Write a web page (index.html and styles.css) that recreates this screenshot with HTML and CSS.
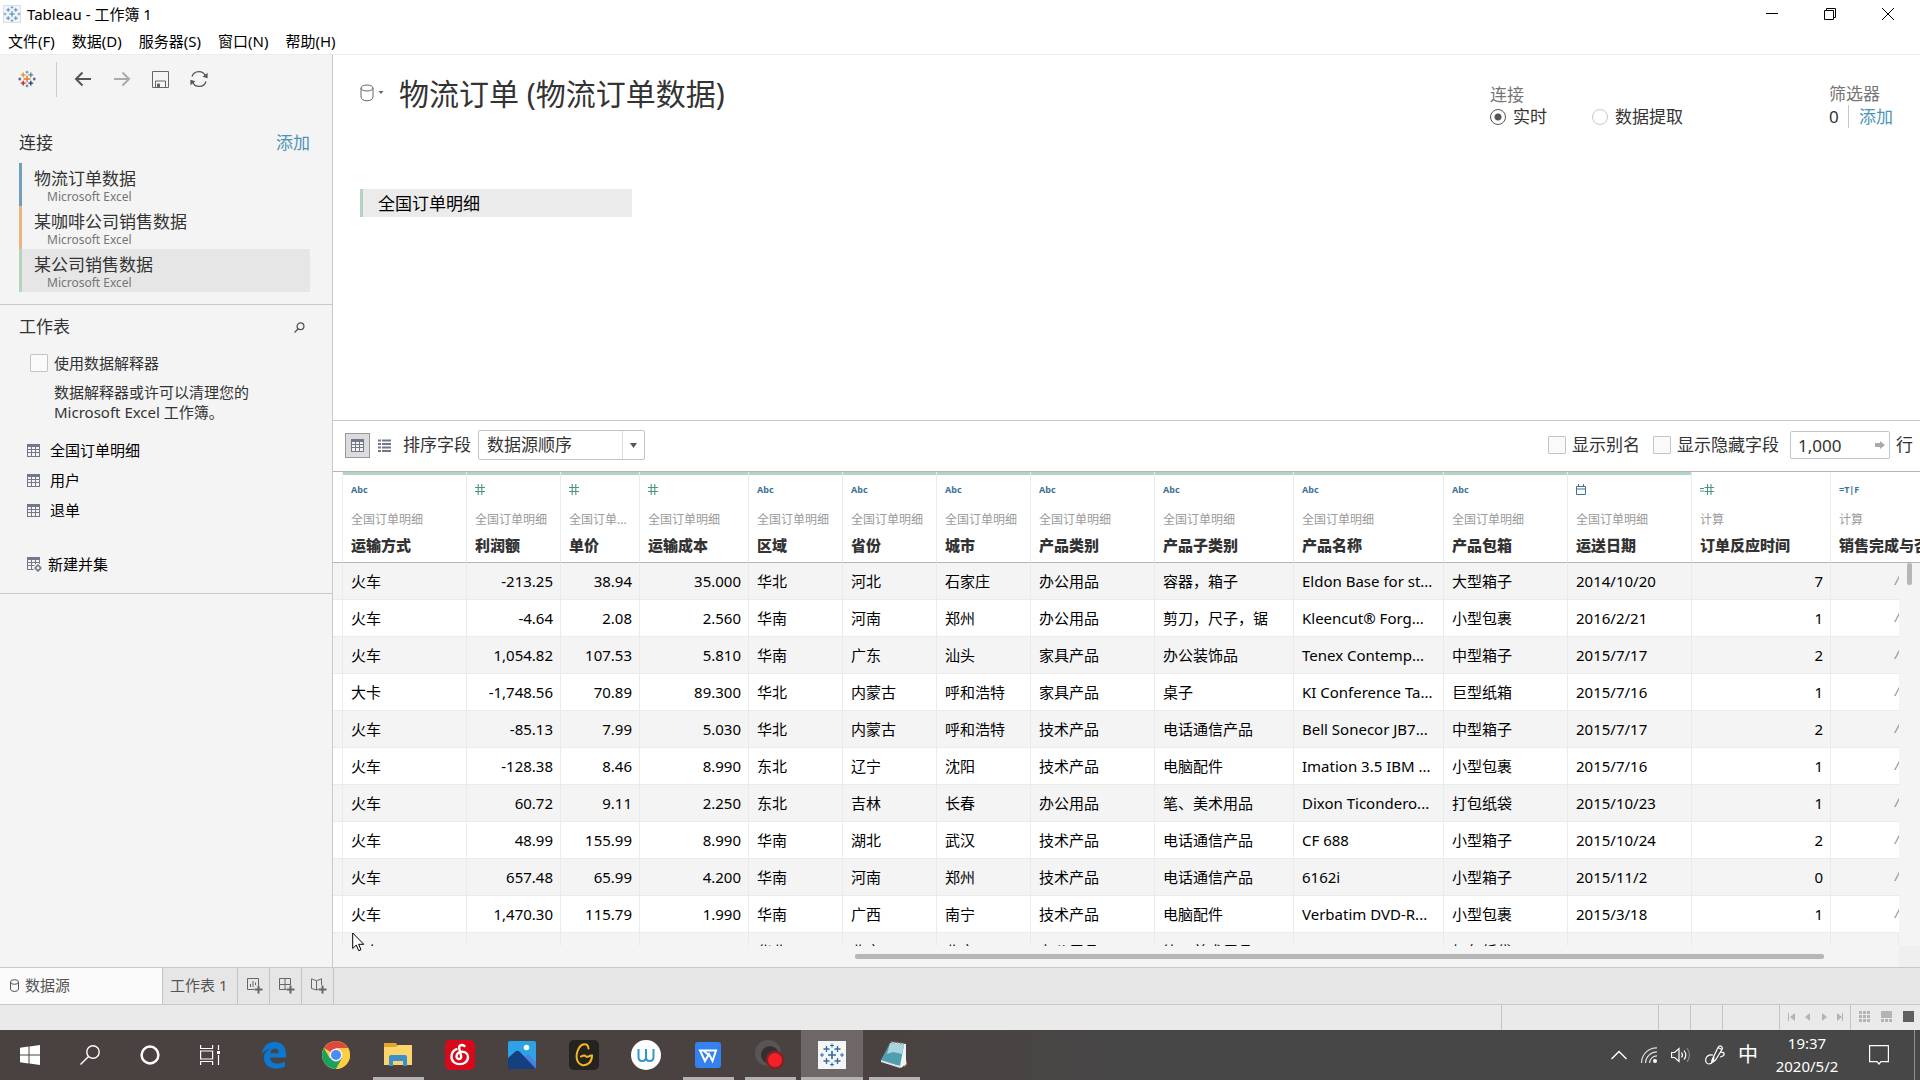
FILE: index.html
```html
<!DOCTYPE html>
<html lang="zh-CN">
<head>
<meta charset="utf-8">
<title>Tableau - 工作簿 1</title>
<link rel="stylesheet" href="styles.css">
</head>
<body>
<svg class="defs" aria-hidden="true">
  <symbol id="grid" viewBox="0 0 13 13"><path fill="#717887" d="M0 0h13v13H0z"/><path fill="#f4f4f4" d="M1 3h3v2H1zM5 3h3v2H5zM9 3h3v2H9zM1 6h3v2H1zM5 6h3v2H5zM9 6h3v2H9zM1 9h3v3H1zM5 9h3v3H5zM9 9h3v3H9z"/></symbol>
  <symbol id="hash" viewBox="0 0 10 11"><path fill="none" stroke="#4a9584" stroke-width="1.1" d="M3.2 0v11M6.8 0v11M0 3.5h10M0 7.5h10"/></symbol>
  <symbol id="logo" viewBox="0 0 26 26"><path fill="none" stroke="currentColor" stroke-width="1.700" d="M13 9v8M9 13h8"/><path fill="none" stroke="currentColor" stroke-width="1.300" d="M7.500 4v6M4.500 7h6M18.500 4v6M15.500 7h6M7.500 16v6M4.500 19h6M18.500 16v6M15.500 19h6"/><path fill="none" stroke="currentColor" stroke-width="1" d="M13 1.500v4M11 3.500h4M13 20.500v4M11 22.500h4M3 11v4M1 13h4M23 11v4M21 13h4"/></symbol>
</svg>

<header class="titlebar">
  <svg class="app-icon" width="18" height="18" viewBox="0 0 26 26"><path fill="#f2f6fa" stroke="#c5c9cc" d="M.5.5h25v25H.5z"/><use href="#logo"/></svg>
  <span class="app-title">Tableau - 工作簿 1</span>
  <div class="window-buttons">
    <button aria-label="最小化"><svg width="12" height="12"><path stroke="#000" d="M0 5.500h12"/></svg></button>
    <button aria-label="还原"><svg width="12" height="12" fill="none" stroke="#000"><path d="M.5 2.500h9v9h-9zM2.500 2.500v-2h9v9h-2"/></svg></button>
    <button aria-label="关闭"><svg width="12" height="12" stroke="#000"><path d="M0 0l12 12M12 0L0 12"/></svg></button>
  </div>
</header>
<nav class="menubar">
  <button>文件(F)</button><button>数据(D)</button><button>服务器(S)</button><button>窗口(N)</button><button>帮助(H)</button>
</nav>

<main class="workspace">
  <aside class="sidebar">
    <div class="toolbar">
      <button aria-label="起始页"><svg width="18" height="18" viewBox="0 0 26 26" fill="none" stroke-width="2"><path stroke="#e8762c" d="M13 8v10M8 13h10"/><path stroke="#eb9129" d="M7.500 3.500v7M4 7h7"/><path stroke="#59879b" d="M18.500 3.500v7M15 7h7"/><path stroke="#c72035" d="M7.500 15.500v7M4 19h7"/><path stroke="#1f457e" d="M18.500 15.500v7M15 19h7"/><path stroke="#7199a6" d="M13 1v4M11 3h4"/><path stroke="#59879b" d="M13 21v4M11 23h4"/><path stroke="#5b6591" d="M2.500 11v4M.5 13h4M23.500 11v4M21.500 13h4"/></svg></button>
      <span class="separator"></span>
      <button aria-label="后退"><svg width="18" height="16" fill="none" stroke="#555" stroke-width="2"><path d="M17 8H2M8.500 1.500L2 8l6.500 6.500"/></svg></button>
      <button aria-label="前进"><svg width="18" height="16" fill="none" stroke="#aaa" stroke-width="2"><path d="M1 8h15M9.500 1.500L16 8l-6.500 6.500"/></svg></button>
      <button aria-label="保存"><svg width="17" height="17" fill="none" stroke="#666"><path d="M.5.5h16v16H.5zM3.500 16v-6h10v6"/><path fill="#666" d="M5.500 13h2v3h-2z"/></svg></button>
      <button aria-label="刷新"><svg width="18" height="18" fill="none" stroke="#555" stroke-width="1.300"><path d="M2 6.500A7.200 7.200 0 0 1 15.500 6M16 11.500A7.200 7.200 0 0 1 2.500 12"/><path fill="#555" stroke="none" d="M17.600 2.800v5.400l-5-1.400zM.4 15.200V9.800l5 1.400z"/></svg></button>
    </div>
    <section class="connections">
      <div class="section-head"><h2>连接</h2><a href="#">添加</a></div>
      <ul>
        <li class="connection blue"><span class="name">物流订单数据</span><span class="kind">Microsoft Excel</span></li>
        <li class="connection orange"><span class="name">某咖啡公司销售数据</span><span class="kind">Microsoft Excel</span></li>
        <li class="connection green selected"><span class="name">某公司销售数据</span><span class="kind">Microsoft Excel</span></li>
      </ul>
    </section>
    <section class="sheets">
      <div class="section-head"><h2>工作表</h2><button aria-label="搜索"><svg width="11" height="11" fill="none" stroke="#555" stroke-width="1.300"><circle cx="6.500" cy="4.300" r="3.400"/><path d="M4.200 6.800L.6 10.500"/></svg></button></div>
      <label class="check interpreter"><input type="checkbox">使用数据解释器</label>
      <p class="hint">数据解释器或许可以清理您的<br>Microsoft Excel 工作簿。</p>
      <ul>
        <li><svg width="13" height="13"><use href="#grid"/></svg>全国订单明细</li>
        <li><svg width="13" height="13"><use href="#grid"/></svg>用户</li>
        <li><svg width="13" height="13"><use href="#grid"/></svg>退单</li>
      </ul>
      <button class="union"><svg width="15" height="15"><use href="#grid" width="13" height="13"/><circle cx="11" cy="11" r="4.500" fill="#f4f4f4"/><circle cx="11" cy="11" r="2.200" fill="none" stroke="#717887" stroke-width="1.500"/><path stroke="#717887" stroke-width="1.200" d="M11 7v1.500M11 13.500V15M7 11h1.500M13.500 11H15"/></svg>新建并集</button>
    </section>
  </aside>

  <div class="content">
    <section class="canvas">
      <div class="source-head">
        <button class="source-menu" aria-label="数据源"><svg width="24" height="18" fill="none" stroke="#666"><ellipse cx="7" cy="4" rx="6" ry="3"/><path d="M1 4v9c0 5 12 5 12 0V4"/><path fill="#666" stroke="none" d="M18.500 7h5l-2.500 3z"/></svg></button>
        <h1>物流订单 (物流订单数据)</h1>
        <fieldset>
          <legend>连接</legend>
          <label><input type="radio" name="mode" checked>实时</label>
          <label><input type="radio" name="mode">数据提取</label>
        </fieldset>
        <div class="filters"><span class="caption">筛选器</span><span class="count">0</span><a href="#">添加</a></div>
      </div>
      <div class="table-pill">全国订单明细</div>
    </section>

    <div class="gridbar">
      <button class="view active" aria-label="网格"><svg width="13" height="13"><use href="#grid"/></svg></button>
      <button class="view" aria-label="列表"><svg width="13" height="13" stroke="#717887" stroke-width="2"><path d="M0 1.500h3M4 1.500h9M0 5h3M4 5h9M0 8.500h3M4 8.500h9M0 12h3M4 12h9"/></svg></button>
      <label for="sort">排序字段</label>
      <span class="select-box"><select id="sort"><option>数据源顺序</option></select><svg width="7" height="5"><path fill="#555" d="M0 0h7L3.500 5z"/></svg></span>
      <label class="check push"><input type="checkbox">显示别名</label>
      <label class="check"><input type="checkbox">显示隐藏字段</label>
      <span class="rows-box"><input id="rows" type="text" value="1,000"><svg width="10" height="8"><path fill="#aaa" d="M0 2h5V0l5 4-5 4V6H0z"/></svg></span>
      <label for="rows">行</label>
    </div>

    <div class="grid-wrap">
      <table>
        <colgroup><col class="c10"><col class="c124"><col class="c94"><col class="c79"><col class="c109"><col class="c94"><col class="c94"><col class="c94"><col class="c124"><col class="c139"><col class="c150"><col class="c124"><col class="c124"><col class="c139"><col><col class="c21"></colgroup>
        <thead><tr>
          <th class="calc"></th>
          <th><i>Abc</i><small>全国订单明细</small><b>运输方式</b></th>
          <th><i><svg width="10" height="11"><use href="#hash"/></svg></i><small>全国订单明细</small><b>利润额</b></th>
          <th><i><svg width="10" height="11"><use href="#hash"/></svg></i><small>全国订单...</small><b>单价</b></th>
          <th><i><svg width="10" height="11"><use href="#hash"/></svg></i><small>全国订单明细</small><b>运输成本</b></th>
          <th><i>Abc</i><small>全国订单明细</small><b>区域</b></th>
          <th><i>Abc</i><small>全国订单明细</small><b>省份</b></th>
          <th><i>Abc</i><small>全国订单明细</small><b>城市</b></th>
          <th><i>Abc</i><small>全国订单明细</small><b>产品类别</b></th>
          <th><i>Abc</i><small>全国订单明细</small><b>产品子类别</b></th>
          <th><i>Abc</i><small>全国订单明细</small><b>产品名称</b></th>
          <th><i>Abc</i><small>全国订单明细</small><b>产品包箱</b></th>
          <th><i><svg width="10" height="11" fill="none" stroke="#3f7396"><path d="M.5 2.500h9v8h-9zM.5 5h9M2.500 0v2.500M7.500 0v2.500"/></svg></i><small>全国订单明细</small><b>运送日期</b></th>
          <th class="calc"><i><svg width="14" height="11" stroke="#4a9584"><path d="M0 4.500h4M0 7h4"/><path stroke-width="1.100" d="M7.500 0v11M11 0v11M4.500 3.500H14M4.500 7.500H14"/></svg></i><small>计算</small><b>订单反应时间</b></th>
          <th class="calc last" colspan="2"><i>=T|F</i><small>计算</small><b>销售完成与否</b></th>
        </tr></thead>
        <tbody>
          <tr><td></td><td>火车</td><td class="n">-213.25</td><td class="n">38.94</td><td class="n">35.000</td><td>华北</td><td>河北</td><td>石家庄</td><td>办公用品</td><td>容器，箱子</td><td>Eldon Base for st...</td><td>大型箱子</td><td>2014/10/20</td><td class="n">7</td><td class="clip">/</td><td class="track" rowspan="11"><div class="thumb"></div></td></tr>
          <tr><td></td><td>火车</td><td class="n">-4.64</td><td class="n">2.08</td><td class="n">2.560</td><td>华南</td><td>河南</td><td>郑州</td><td>办公用品</td><td>剪刀，尺子，锯</td><td>Kleencut® Forg...</td><td>小型包裹</td><td>2016/2/21</td><td class="n">1</td><td class="clip">/</td></tr>
          <tr><td></td><td>火车</td><td class="n">1,054.82</td><td class="n">107.53</td><td class="n">5.810</td><td>华南</td><td>广东</td><td>汕头</td><td>家具产品</td><td>办公装饰品</td><td>Tenex Contemp...</td><td>中型箱子</td><td>2015/7/17</td><td class="n">2</td><td class="clip">/</td></tr>
          <tr><td></td><td>大卡</td><td class="n">-1,748.56</td><td class="n">70.89</td><td class="n">89.300</td><td>华北</td><td>内蒙古</td><td>呼和浩特</td><td>家具产品</td><td>桌子</td><td>KI Conference Ta...</td><td>巨型纸箱</td><td>2015/7/16</td><td class="n">1</td><td class="clip">/</td></tr>
          <tr><td></td><td>火车</td><td class="n">-85.13</td><td class="n">7.99</td><td class="n">5.030</td><td>华北</td><td>内蒙古</td><td>呼和浩特</td><td>技术产品</td><td>电话通信产品</td><td>Bell Sonecor JB7...</td><td>中型箱子</td><td>2015/7/17</td><td class="n">2</td><td class="clip">/</td></tr>
          <tr><td></td><td>火车</td><td class="n">-128.38</td><td class="n">8.46</td><td class="n">8.990</td><td>东北</td><td>辽宁</td><td>沈阳</td><td>技术产品</td><td>电脑配件</td><td>Imation 3.5 IBM ...</td><td>小型包裹</td><td>2015/7/16</td><td class="n">1</td><td class="clip">/</td></tr>
          <tr><td></td><td>火车</td><td class="n">60.72</td><td class="n">9.11</td><td class="n">2.250</td><td>东北</td><td>吉林</td><td>长春</td><td>办公用品</td><td>笔、美术用品</td><td>Dixon Ticondero...</td><td>打包纸袋</td><td>2015/10/23</td><td class="n">1</td><td class="clip">/</td></tr>
          <tr><td></td><td>火车</td><td class="n">48.99</td><td class="n">155.99</td><td class="n">8.990</td><td>华南</td><td>湖北</td><td>武汉</td><td>技术产品</td><td>电话通信产品</td><td>CF 688</td><td>小型箱子</td><td>2015/10/24</td><td class="n">2</td><td class="clip">/</td></tr>
          <tr><td></td><td>火车</td><td class="n">657.48</td><td class="n">65.99</td><td class="n">4.200</td><td>华南</td><td>河南</td><td>郑州</td><td>技术产品</td><td>电话通信产品</td><td>6162i</td><td>小型箱子</td><td>2015/11/2</td><td class="n">0</td><td class="clip">/</td></tr>
          <tr><td></td><td>火车</td><td class="n">1,470.30</td><td class="n">115.79</td><td class="n">1.990</td><td>华南</td><td>广西</td><td>南宁</td><td>技术产品</td><td>电脑配件</td><td>Verbatim DVD-R...</td><td>小型包裹</td><td>2015/3/18</td><td class="n">1</td><td class="clip">/</td></tr>
          <tr><td></td><td>火车</td><td class="n"></td><td class="n"></td><td class="n"></td><td>华北</td><td>北京</td><td>北京</td><td>办公用品</td><td>笔、美术用品</td><td></td><td>打包纸袋</td><td></td><td class="n"></td><td></td></tr>
        </tbody>
      </table>
    </div>
    <div class="hscroll"><div class="bar"></div><div class="corner"></div></div>
  </div>
</main>

<nav class="tabs">
  <button class="tab source"><svg width="9" height="13" fill="none" stroke="#555"><ellipse cx="4.500" cy="3" rx="4" ry="2.300"/><path d="M.5 3v7c0 3.200 8 3.200 8 0V3"/></svg>数据源</button>
  <button class="tab sheet">工作表 1</button>
  <button class="tab add" aria-label="新建工作表"><svg width="16" height="16" fill="none" stroke="#666"><path d="M7 11.500H.5V.5h11V7M3.500 9V6M6 9V3M8.500 7V4.500"/><path stroke-width="2" d="M11.500 7.500v8M7.500 11.500h8"/></svg></button>
  <button class="tab add" aria-label="新建仪表板"><svg width="16" height="16" fill="none" stroke="#666"><path d="M7 11.500H.5V.5h11V7M.5 6.500h11M6 .5v11"/><path stroke-width="2" d="M11.500 7.500v8M7.500 11.500h8"/></svg></button>
  <button class="tab add" aria-label="新建故事"><svg width="16" height="16" fill="none" stroke="#666"><path d="M7 11L5.500 12 .5 10.500V.8l5 2L10.500.8V7M5.500 3v9"/><path stroke-width="2" d="M11.500 7.500v8M7.500 11.500h8"/></svg></button>
</nav>
<div class="statusbar">
  <span class="s156"></span><span class="s32"></span><span class="s32"></span><span class="s57"></span>
  <span class="s71"><svg width="56" height="8" fill="#b4b4b4"><path d="M0 0h1v8H0zM7 0v8L2 4zM22 0v8l-5-4zM34 0v8l5-4zM49 0v8l5-4zM54 0h1v8h-1z"/></svg></span>
  <span class="s70"><svg width="56" height="12"><path fill="#b4b4b4" d="M0 0h3v3H0zM4 0h3v3H4zM8 0h3v3H8zM0 4h3v3H0zM4 4h3v3H4zM8 4h3v3H8zM0 8h3v3H0zM4 8h3v3H4zM8 8h3v3H8zM22 0h11v7H22zM22 8h3v3h-3zM26 8h3v3h-3zM30 8h3v3h-3z"/><path fill="#606060" d="M44 0h11v11H44z"/></svg></span>
</div>

<footer class="taskbar">
  <button class="sys" aria-label="开始"><svg width="20" height="20" fill="#fff"><path d="M0 2.800l8.500-1.200v8H0zM9.500 1.400L20 0v9.500H9.500zM0 10.500h8.500v8L0 17.300zM9.500 10.500H20V20L9.500 18.600z"/></svg></button>
  <button class="sys" aria-label="搜索"><svg width="20" height="20" fill="none" stroke="#fff" stroke-width="1.400"><circle cx="13" cy="7" r="6.200"/><path d="M8.500 11.500L.5 19.500"/></svg></button>
  <button class="sys" aria-label="Cortana"><svg width="20" height="20" fill="none" stroke="#fff" stroke-width="2.500"><circle cx="10" cy="10" r="8.400"/></svg></button>
  <button class="sys" aria-label="任务视图"><svg width="21" height="20" fill="none" stroke="#fff" stroke-width="1.200"><path d="M.6 0v3.500h12V0M.6 6h12v8H.6zM.6 20v-3.500h12V20M18.500 0v5M18.500 10v10"/><path fill="#fff" stroke="none" d="M17 6h3v3h-3z"/></svg></button>
  <button class="app first" aria-label="Edge"><svg width="26" height="28" viewBox="0 0 26 28"><path fill="#0b78d4" d="M1 13C2 5 7 1 13.500 1 21 1 25 6.500 25 13v3.500H9c.3 7 9.500 7.500 15 4v5C14 30 3 27 3 17c0-4.500 2.500-7.500 6.500-9.200C5.500 8.300 3 10 1 13zm8.200-.7h8.600C18 6 10 6 9.200 12.300z"/></svg></button>
  <button class="app" aria-label="Chrome"><svg width="28" height="28" viewBox="0 0 28 28"><circle cx="14" cy="14" r="14" fill="#ffcd42"/><path fill="#db4a3c" d="M14 14L1.900 7A14 14 0 0 1 26.100 7H14z"/><path fill="#1aa15f" d="M14 14l6 3.500L14 28A14 14 0 0 1 1.900 7l6 10.500z"/><path fill="#ffcd42" d="M14 7h12.100A14 14 0 0 1 14 28l6-10.500z"/><circle cx="14" cy="14" r="6.400" fill="#f1f1f1"/><circle cx="14" cy="14" r="5" fill="#4c8bf5"/></svg></button>
  <button class="app open" aria-label="文件资源管理器"><svg width="28" height="24" viewBox="0 0 28 24"><path fill="#e3a52b" d="M0 0h12l2 3h14v4H0z"/><path fill="#fbd56c" d="M0 4h12l2-2h14v20H0z"/><path fill="#3d8fcc" d="M5 23v-9q0-2 2-2h14q2 0 2 2v9h-4v-5H9v5z"/></svg></button>
  <button class="app" aria-label="网易云音乐"><svg width="30" height="30" fill="none" stroke="#fff" stroke-width="2.400"><rect width="30" height="30" rx="5" fill="#d8091b" stroke="none"/><path stroke-linecap="round" d="M19.500 6c-3-2-6-.5-5.300 2.500l1.900 7.500c.7 4-4.600 4-4.600.5 0-6.500 11.500-6.500 11.500.5 0 9.500-16.500 9.500-16.500 0 0-4 2-6.500 5-7.800"/></svg></button>
  <button class="app" aria-label="照片"><svg width="28" height="28"><rect width="28" height="28" rx="2" fill="#2ba3e6"/><circle cx="18.500" cy="6.500" r="2.800" fill="#fff"/><path fill="#4d7fdd" d="M12 20l8-7 8 8v7H12z"/><path fill="#153f80" d="M0 17l8-7q2-1 4 1l16 17H0z"/></svg></button>
  <button class="app" aria-label="G"><svg width="30" height="30" fill="none" stroke="#f2b81e" stroke-width="2"><rect width="30" height="30" rx="5" fill="#242321" stroke="none"/><path stroke-linecap="round" d="M19.500 8.500C19 3 13 3 10 8c-4 7-3 15 3 17 6 1 10-3 10-9.500-3-.5-4 2.500-6 1-1.500-2-3-1-5 0"/></svg></button>
  <button class="app" aria-label="W"><svg width="30" height="30" fill="none" stroke="#3296c8" stroke-width="2"><circle cx="15" cy="15" r="15" fill="#fff" stroke="none"/><path d="M7.500 9v8q0 4 3.700 4 3.800 0 3.800-4V9v8q0 4 3.700 4 3.800 0 3.800-4V9"/></svg></button>
  <button class="app open" aria-label="WPS"><svg width="26" height="26" fill="none" stroke="#fff" stroke-width="2"><rect width="26" height="26" rx="3" fill="#3482f0" stroke="none"/><path d="M5 8.500h16l-3.500 10.500-3.500-7-4 7zM9 9l4.500 4"/></svg></button>
  <button class="app open" aria-label="录屏"><svg width="30" height="30"><circle cx="13" cy="13" r="13" fill="#5a5555"/><circle cx="15" cy="15" r="9" fill="#343030"/><circle cx="20" cy="20" r="9.500" fill="#7c2528"/><circle cx="20" cy="20" r="7" fill="#f51f25"/></svg></button>
  <button class="app open current" aria-label="Tableau"><svg width="28" height="28" viewBox="-1 -1 28 28"><path fill="#f3f5f7" d="M-1-1h28v28H-1z"/><use href="#logo" width="26" height="26"/></svg></button>
  <button class="app open" aria-label="记事本"><svg width="28" height="28" viewBox="0 0 28 28"><path fill="#d9a548" d="M25 14l2 9-3 3z"/><path fill="#eef3f4" d="M11 1l15 2v20l-5 4-4-3z"/><path fill="#4f9fb0" d="M10 2l14 2-4 21L1 19z"/><path fill="#a8d5de" d="M10 2l14 2-2 9-9-2-6 2z"/><path fill="#dfeaec" d="M1 19l19 6v2L1 21z"/><path stroke="#8a8f92" stroke-dasharray="1 2" stroke-width="2" d="M11 1l14 2"/></svg></button>
  <div class="tray">
    <svg class="t31" width="16" height="10" fill="none" stroke="#fff" stroke-width="1.400"><path d="M.5 9L8 1.500 15.500 9"/></svg>
    <svg class="t31" width="16" height="16" fill="none" stroke="#ddd" stroke-width="1.200"><path d="M.6 16A15 15 0 0 1 16 .8M4.500 16A11.500 11.500 0 0 1 16 4.800M8.500 16A7.500 7.500 0 0 1 16 8.800"/><circle cx="14" cy="14" r="2" fill="#fff" stroke="none"/></svg>
    <svg class="t31" width="20" height="16" fill="none" stroke="#fff" stroke-width="1.200"><path d="M.6 5.500h3L8 1.500v13l-4.400-4h-3zM10.500 5.500q2 2.500 0 5M13 3.500q3.600 4.500 0 9"/><path stroke="#888" d="M16 1q5 7 0 14"/></svg>
    <svg class="t35" width="20" height="20" fill="none" stroke="#fff" stroke-width="1.200"><path d="M7 15L13 2.500q1.500-2.500 3.500-1 1.500 1 .5 3L10.500 15 6.500 18zM13 2.500l4 2M8 10c-9-1-9 9-4 9 5 0 5-7 5-9M15 7c6 0 5 4 0 5"/></svg>
    <span class="ime">中</span>
    <time>19:37<br>2020/5/2</time>
    <svg class="notice" width="20" height="20" fill="none" stroke="#fff" stroke-width="1.200"><path d="M.6.6h18.800v16H12L10 19l-2-2.400H.6z"/></svg>
    <span class="peek"></span>
  </div>
</footer>
<svg class="cursor" width="13" height="20" viewBox="0 0 13 20"><path fill="#fff" stroke="#000" d="M.7 1v15.500l3.600-3.400 2.400 5.600 2.300-1-2.400-5.400h5.200z"/></svg>
</body>
</html>
```
FILE: styles.css
```css
* { box-sizing: border-box; }

body {
  margin: 0;
  height: 100vh;
  display: flex;
  flex-direction: column;
  overflow: hidden;
  background: #fff;
  color: #333;
  font: 15px/20px "Noto Sans", "Noto Sans CJK SC", sans-serif;
}

button, input, select { font: inherit; color: inherit; }
button { border: 0; padding: 0; background: none; }
ul { list-style: none; margin: 0; padding: 0; }
h1, h2, p { margin: 0; font-weight: normal; }
a { color: #4c93b8; text-decoration: none; }
svg { display: block; flex: none; }
.defs { position: absolute; width: 0; height: 0; }

/* Window chrome */
.titlebar { display: flex; align-items: center; height: 28px; padding-left: 3px; color: #000; flex: none; }
.app-icon { color: #4a86b8; margin-right: 6px; }
.window-buttons { display: flex; margin-left: auto; padding-right: 3px; }
.window-buttons button { width: 58px; height: 28px; display: flex; align-items: center; justify-content: center; }
.menubar { display: flex; gap: 17px; align-items: center; height: 27px; padding: 0 8px; border-bottom: 1px solid #ececec; color: #000; flex: none; }

.workspace { flex: 1; min-height: 0; display: flex; }

/* Left pane */
.sidebar { width: 333px; flex: none; background: #f4f4f4; border-right: 1px solid #c9c9c9; }
.toolbar { display: flex; align-items: center; gap: 21px; height: 48px; padding-left: 18px; }
.separator { width: 1px; height: 35px; margin: 0 -4px 0 -1px; background: #ccc; }
.section-head { display: flex; justify-content: space-between; align-items: center; height: 24px; padding: 0 22px 0 19px; font-size: 17px; }
.section-head h2 { font-size: 17px; line-height: 24px; }
.connections { padding: 28px 0 12px; border-bottom: 1px solid #c9c9c9; }
.connections ul { margin: 8px 22px 0 19px; }
.connection { height: 43px; padding: 4px 0 0 12px; border-left: 3px solid; }
.connection span { display: block; }
.connection .name { font-size: 17px; line-height: 23px; }
.connection .kind { font-size: 12px; line-height: 14px; padding-left: 13px; color: #757575; }
.blue { border-color: #6f9fbd; }
.orange { border-color: #efb27f; }
.green { border-color: #b1d5c0; }
.selected { background: #e6e6e6; }
.sheets { padding: 10px 0 14px; border-bottom: 1px solid #c9c9c9; }
.sheets .section-head { padding-right: 27px; }
.check { display: flex; align-items: center; }
.check input { appearance: none; width: 18px; height: 18px; margin: 0 6px 0 0; border: 1px solid #c4c4c4; border-radius: 1px; background: #fafafa; }
.interpreter { margin: 14px 0 0 30px; }
.hint { margin: 9px 0 0 54px; }
.sheets ul { margin: 13px 0 0 27px; color: #000; }
.sheets li { display: flex; align-items: center; gap: 10px; height: 30px; }
.union { display: flex; align-items: center; gap: 6px; height: 30px; margin: 24px 0 0 27px; color: #000; }

/* Data source canvas */
.content { flex: 1; min-width: 0; display: flex; flex-direction: column; }
.canvas { height: 366px; flex: none; border-bottom: 1px solid #c9c9c9; padding: 19px 26px 0 27px; }
.source-head { display: flex; align-items: flex-start; height: 115px; }
.source-menu { margin: 10px 15px 0 0; }
h1 { font-size: 30px; line-height: 40px; }
fieldset { display: flex; gap: 45px; margin: 10px 146px 0 auto; padding: 0; border: 0; font-size: 17px; line-height: 22px; }
legend { padding: 0; color: #757575; line-height: 22px; }
fieldset label { display: flex; align-items: center; gap: 7px; }
input[type="radio"] { appearance: none; width: 16px; height: 16px; margin: 0; border: 1px solid #c8c8c8; border-radius: 50%; }
input[type="radio"]:checked { border-color: #555; background: radial-gradient(circle, #555 3px, transparent 4px); }
.filters { display: grid; grid-template-columns: 20px 45px; margin-top: 8px; font-size: 17px; line-height: 23px; }
.filters .caption { grid-column: 1 / 3; color: #757575; }
.filters .count { border-right: 1px solid #c8c8c8; }
.filters a { padding-left: 10px; }
.table-pill { width: 272px; height: 28px; padding-left: 15px; border-left: 3px solid #b1d5c0; background: #ebebeb; color: #000; font-size: 17px; line-height: 30px; }

/* Grid controls */
.gridbar { display: flex; align-items: center; height: 51px; flex: none; padding: 0 7px 2px 12px; border-bottom: 1px solid #b4b4b4; font-size: 17px; }
.view { width: 25px; height: 25px; display: flex; align-items: center; justify-content: center; margin-right: 2px; }
.view + label { margin: 0 7px 0 4px; }
.active { border: 1px solid #999; background: #dcdcde; }
.select-box, .rows-box { display: flex; align-items: center; border: 1px solid #c4c4c4; border-radius: 2px; }
.select-box { width: 167px; height: 30px; }
.select-box select { appearance: none; border: 0; border-right: 1px solid #dcdcdc; background: none; width: 144px; height: 28px; padding: 0 0 0 8px; margin-right: 7px; }
.push { margin-left: auto; }
.gridbar .check + .check { margin: 0 11px 0 13px; }
.rows-box { width: 100px; height: 28px; margin-right: 6px; justify-content: space-between; padding: 0 4px 0 7px; }
.rows-box input { width: 66px; height: 24px; border: 0; padding: 0; background: none; }

/* Data grid */
.grid-wrap { flex: 1; min-height: 0; overflow: hidden; }
table { table-layout: fixed; width: 100%; border-spacing: 0; }
.c10 { width: 10px; }
.c21 { width: 21px; }
.c79 { width: 79px; }
.c94 { width: 94px; }
.c109 { width: 109px; }
.c124 { width: 124px; }
.c139 { width: 139px; }
.c150 { width: 150px; }
th { height: 91px; padding: 12px 4px 0 8px; overflow: hidden; vertical-align: top; text-align: left; border-right: 1px solid #ebebeb; border-bottom: 1px solid #b4b4b4; background: #fff linear-gradient(#b1d5c0, #b1d5c0) 0 0 / 100% 3px no-repeat padding-box; }
th.calc { background: #fff; }
th.last { border-right: 0; padding-right: 0; }
th i { display: block; height: 12px; font: bold 9px/12px "Noto Sans", sans-serif; color: #3f7396; }
th small { display: block; margin-top: 15px; white-space: nowrap; font-size: 12px; line-height: 18px; font-weight: normal; color: #9a9a9a; }
th b { display: block; margin-top: 4px; white-space: nowrap; line-height: 24px; }
td { height: 37px; padding: 0 7px 0 8px; overflow: hidden; white-space: nowrap; border-right: 1px solid #ebebeb; border-bottom: 1px solid #ebebeb; color: #000; }
td:first-child, th:first-child { padding: 0; }
tbody tr:nth-child(odd) { background: #f4f4f4; }
.n { text-align: right; }
td.clip { padding-right: 0; border-right: 0; text-align: right; font-style: italic; font-size: 12px; color: #888; }
td.track { padding: 0 0 0 8px; border: 0; vertical-align: top; background: #f4f4f4; }
.thumb { width: 5px; height: 22px; border-radius: 2px; background: #b6b6b6; }
.hscroll { display: flex; height: 21px; flex: none; background: #f4f4f4; }
.bar { flex: 1; height: 5px; margin: 8px 75px 0 522px; border-radius: 2px; background: #b6b6b6; }
.corner { width: 21px; background: #efefef; }

/* Sheet tabs and status bar */
.tabs { display: flex; height: 38px; flex: none; border: solid #c9c9c9; border-width: 1px 0; background: #e6e6e6; color: #555; }
.tab { display: flex; align-items: center; border-right: 1px solid #c4c4c4; }
.source { width: 163px; gap: 6px; padding: 0 0 2px 10px; background: #fbfbfb; }
.sheet { width: 75px; padding: 0 0 2px 7px; white-space: nowrap; }
.add { width: 32px; padding-left: 9px; }
.statusbar { display: flex; justify-content: flex-end; height: 25px; flex: none; background: #eaeaea; }
.statusbar span { display: flex; align-items: center; padding: 0 0 1px 8px; border-left: 1px solid #c4c4c4; }
.s156 { width: 157px; }
.s32 { width: 32px; }
.s57 { width: 57px; }
.s71 { width: 71px; }
.s70 { width: 70px; }

/* Taskbar */
.taskbar { display: flex; height: 50px; flex: none; background: linear-gradient(90deg, #4a4241 45%, #474747 60%); color: #fff; }
.taskbar button { display: flex; align-items: center; justify-content: center; }
.sys { width: 60px; }
.app { width: 62px; }
.first { margin-left: 3px; }
.open { background: linear-gradient(#b5b2b2, #b5b2b2) center bottom / 51px 3px no-repeat; }
.current { color: #2d6fa5; background: linear-gradient(#b5b2b2, #b5b2b2) center bottom / 100% 3px no-repeat #6d6767; }
.tray { display: flex; align-items: center; margin-left: auto; }
.t31 { margin-right: 14px; }
.t35 { margin: 0 13px 0 0; }
.ime { font-size: 20px; line-height: 24px; width: 20px; margin-right: 16px; }
time { line-height: 23px; text-align: center; width: 66px; }
.notice { margin: 0 25px 0 29px; }
.peek { width: 6px; height: 50px; border-left: 1px solid #909090; }
.cursor { position: absolute; left: 352px; top: 932px; }
```
